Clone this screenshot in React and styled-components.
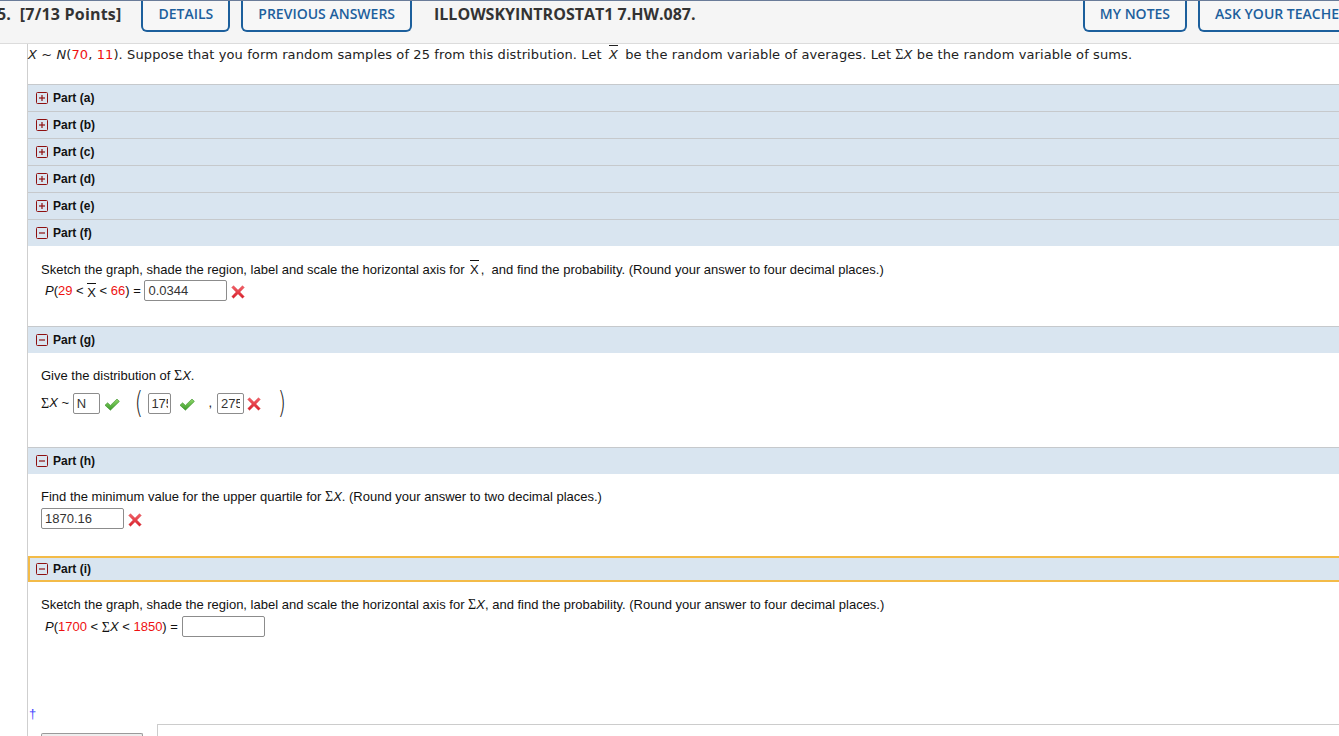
import React from "react";
import styled, { createGlobalStyle } from "styled-components";

const GlobalStyle = createGlobalStyle`
  html, body {
    margin: 0;
    padding: 0;
    background: #ffffff;
    overflow: hidden;
  }
`;

const Page = styled.div`
  width: 1339px;
  height: 736px;
  overflow: hidden;
`;

const Header = styled.div`
  display: flex;
  align-items: flex-start;
  width: 1365px;
  height: 42px;
  background: #f5f5f5;
  border-top: 1px solid #6a7c99;
  border-bottom: 1px solid #dcdcdc;
  font-family: "Open Sans", "Liberation Sans", sans-serif;
`;

const Points = styled.div`
  margin-left: -3px;
  padding-top: 3px;
  font-size: 16px;
  font-weight: 700;
  letter-spacing: 0.2px;
  color: #333333;
  line-height: 20px;
  white-space: pre;
`;

const HeaderBtn = styled.div`
  box-sizing: border-box;
  height: 31px;
  margin-left: ${(p) => p.$ml || 11}px;
  padding: 3px 15px 0;
  border: 2px solid #1c5f9c;
  border-top: none;
  border-radius: 0 0 6px 6px;
  font-size: 14px;
  font-weight: 600;
  line-height: 20px;
  color: #1d5f9d;
  background: #f7f7f7;
  white-space: nowrap;
`;

const Title = styled.div`
  margin-left: 22px;
  padding-top: 3px;
  font-size: 16px;
  font-weight: 700;
  line-height: 20px;
  color: #333333;
  white-space: nowrap;
`;

const Main = styled.div`
  margin-left: 27px;
  border-left: 1px solid #cfcfcf;
  min-height: 692px;
`;

const Question = styled.div`
  box-sizing: border-box;
  height: 40px;
  padding-top: 0;
  font-family: "DejaVu Sans", Verdana, sans-serif;
  font-size: 13px;
  line-height: 20px;
  letter-spacing: 0.1px;
  color: #222222;
  white-space: nowrap;
`;

const Red = styled.span`
  color: #ee1111;
`;

const It = styled.i`
  font-style: italic;
`;

const Sigma = styled.span`
  font-family: "Liberation Serif", "Times New Roman", serif;
  font-size: 1.08em;
`;

const Bar = styled.span`
  display: inline-block;
  line-height: 1;
  padding-top: 2px;
  border-top: 1px solid currentColor;
  margin: ${(p) => p.$m || "0"};
`;

const PartHead = styled.div`
  box-sizing: border-box;
  display: flex;
  align-items: center;
  gap: 5px;
  height: 27px;
  padding-left: ${(p) => (p.$active ? 6 : 8)}px;
  background: #d9e5f0;
  border-top: 1px solid #c6c9cc;
  ${(p) =>
    p.$active &&
    `
    height: 26px;
    border: 2px solid #f3bb48;
    border-right: none;
  `}
  font-family: "Liberation Sans", Arial, sans-serif;
  font-size: 12px;
  font-weight: 700;
  color: #111111;
`;

const PartBody = styled.div`
  padding: 14px 13px ${(p) => p.$pb ?? 26}px;
  font-family: "Liberation Sans", Arial, sans-serif;
  font-size: 13px;
  line-height: 16px;
  color: #111111;
`;

const Prompt = styled.div`
  height: 16px;
  white-space: nowrap;
`;

const Row = styled.div`
  display: flex;
  align-items: center;
  margin-top: 4px;
  padding-left: ${(p) => p.$pl || 0}px;
  height: ${(p) => p.$h || 21}px;
  white-space: pre;
`;

const Answer = styled.input`
  box-sizing: border-box;
  width: ${(p) => p.$w}px;
  height: 21px;
  margin: 0 ${(p) => p.$mr ?? 4}px 0 ${(p) => p.$ml || 0}px;
  padding: 0 ${(p) => p.$pad ?? 3}px;
  border: 1px solid #8c8c8c;
  border-radius: 2px;
  font-family: "Liberation Sans", Arial, sans-serif;
  font-size: 13px;
  color: #333333;
  background: #ffffff;
  outline: none;
`;

const Paren = styled.span`
  display: inline-block;
  font-family: "DejaVu Sans", sans-serif;
  font-weight: 200;
  font-size: 30px;
  line-height: 32px;
  color: #222222;
  transform: scaleX(0.7);
  margin: ${(p) => p.$m};
`;

const Comma = styled.span`
  margin: 0 5px 0 13px;
`;

const Dagger = styled.div`
  margin: 70px 0 0 1px;
  height: 14px;
  font-family: "Liberation Sans", Arial, sans-serif;
  font-size: 13px;
  line-height: 14px;
  color: #4a4aff;
`;

const Footer = styled.div`
  display: flex;
  align-items: flex-start;
  gap: 14px;
  margin-top: 3px;
  padding-left: 13px;
`;

const GrayBtn = styled.div`
  width: 100px;
  height: 20px;
  margin-top: 9px;
  background: #eeeeee;
  border: 1px solid #9a9a9a;
  border-bottom: none;
  border-radius: 2px 2px 0 0;
`;

const FrameBox = styled.div`
  flex: 1;
  height: 30px;
  border-top: 1px solid #cccccc;
  border-left: 1px solid #cccccc;
`;

const ToggleIcon = ({ open }) => (
  <svg width="12" height="12" viewBox="0 0 12 12">
    <rect x="0.5" y="0.5" width="11" height="11" rx="1" fill="none" stroke="#8e1010" />
    <line x1="3" y1="6" x2="9" y2="6" stroke="#8e1010" strokeWidth="1.2" />
    {!open && <line x1="6" y1="3" x2="6" y2="9" stroke="#8e1010" strokeWidth="1.2" />}
  </svg>
);

const Check = () => (
  <svg width="16" height="13" viewBox="0 0 16 13" style={{ margin: "2px 0 0" }}>
    <defs>
      <linearGradient id="chk" x1="0" y1="0" x2="0" y2="1">
        <stop offset="0" stopColor="#8fd86a" />
        <stop offset="1" stopColor="#3b9a2a" />
      </linearGradient>
    </defs>
    <path d="M1 7.2 L3.6 4.8 L6.4 7.4 L13 1 L15.4 3.4 L6.4 12.2 Z" fill="url(#chk)" stroke="#3a8f2a" strokeWidth="0.6" strokeLinejoin="round" />
  </svg>
);

const Cross = () => (
  <svg width="14" height="14" viewBox="0 0 14 14" style={{ margin: "2px 0 0" }}>
    <defs>
      <linearGradient id="crs" x1="0" y1="0" x2="0" y2="1">
        <stop offset="0" stopColor="#f4636b" />
        <stop offset="1" stopColor="#d81f2a" />
      </linearGradient>
    </defs>
    <path
      d="M2.5 0.8 L7 5.2 L11.5 0.8 L13.2 2.5 L8.8 7 L13.2 11.5 L11.5 13.2 L7 8.8 L2.5 13.2 L0.8 11.5 L5.2 7 L0.8 2.5 Z"
      fill="url(#crs)"
      stroke="#d42a33"
      strokeWidth="0.5"
      strokeLinejoin="round"
    />
  </svg>
);

const Part = ({ label, open, active }) => (
  <PartHead $active={active}>
    <ToggleIcon open={open} />
    <span>Part ({label})</span>
  </PartHead>
);

export default function App() {
  return (
    <Page>
      <GlobalStyle />
      <Header>
        <Points>5.  [7/13 Points]</Points>
        <HeaderBtn $ml={20}>DETAILS</HeaderBtn>
        <HeaderBtn>PREVIOUS ANSWERS</HeaderBtn>
        <Title>ILLOWSKYINTROSTAT1 7.HW.087.</Title>
        <HeaderBtn style={{ marginLeft: "auto" }}>MY NOTES</HeaderBtn>
        <HeaderBtn>ASK YOUR TEACHER</HeaderBtn>
      </Header>
      <Main>
        <Question>
          <It>X</It> ~ <It>N</It>(<Red>70</Red>, <Red>11</Red>). Suppose that you form random samples of 25 from this
          distribution. Let <Bar $m="0 3px"><It>X</It></Bar> be the random variable of averages. Let <Sigma>Σ</Sigma>
          <It>X</It> be the random variable of sums.
        </Question>

        {["a", "b", "c", "d", "e"].map((l) => (
          <Part key={l} label={l} />
        ))}
        <Part label="f" open />
        <PartBody $pb={25}>
          <Prompt>
            Sketch the graph, shade the region, label and scale the horizontal axis for <Bar $m="0 2px">X</Bar>,&nbsp; and
            find the probability. (Round your answer to four decimal places.)
          </Prompt>
          <Row $pl={4}>
            <It>P</It>(<Red>29</Red> &lt; <Bar>X</Bar> &lt; <Red>66</Red>) = <Answer $w={83} readOnly value="0.0344" />
            <Cross />
          </Row>
        </PartBody>

        <Part label="g" open />
        <PartBody $pb={28}>
          <Prompt>
            Give the distribution of <Sigma>Σ</Sigma>
            <It>X</It>.
          </Prompt>
          <Row $h={32}>
            <Sigma>Σ</Sigma>
            <It>X</It> ~ <Answer $w={27} readOnly value="N" />
            <Check />
            <Paren $m="0 0 0 13px">(</Paren>
            <Answer $w={23} $ml={4} $mr={8} $pad={2} readOnly value="1750" />
            <Check />
            <Comma>,</Comma>
            <Answer $w={27} $mr={3} $pad={3} readOnly value="2750" />
            <Cross />
            <Paren $m="0 0 0 15px">)</Paren>
          </Row>
        </PartBody>

        <Part label="h" open />
        <PartBody $pb={27}>
          <Prompt>
            Find the minimum value for the upper quartile for <Sigma>Σ</Sigma>
            <It>X</It>. (Round your answer to two decimal places.)
          </Prompt>
          <Row>
            <Answer $w={83} readOnly value="1870.16" />
            <Cross />
          </Row>
        </PartBody>

        <Part label="i" open active />
        <PartBody $pb={0}>
          <Prompt>
            Sketch the graph, shade the region, label and scale the horizontal axis for <Sigma>Σ</Sigma>
            <It>X</It>, and find the probability. (Round your answer to four decimal places.)
          </Prompt>
          <Row $pl={4}>
            <It>P</It>(<Red>1700</Red> &lt; <Sigma>Σ</Sigma>
            <It>X</It> &lt; <Red>1850</Red>) = <Answer $w={83} readOnly value="" />
          </Row>
        </PartBody>

        <Dagger>†</Dagger>
        <Footer>
          <GrayBtn />
          <FrameBox />
        </Footer>
      </Main>
    </Page>
  );
}
